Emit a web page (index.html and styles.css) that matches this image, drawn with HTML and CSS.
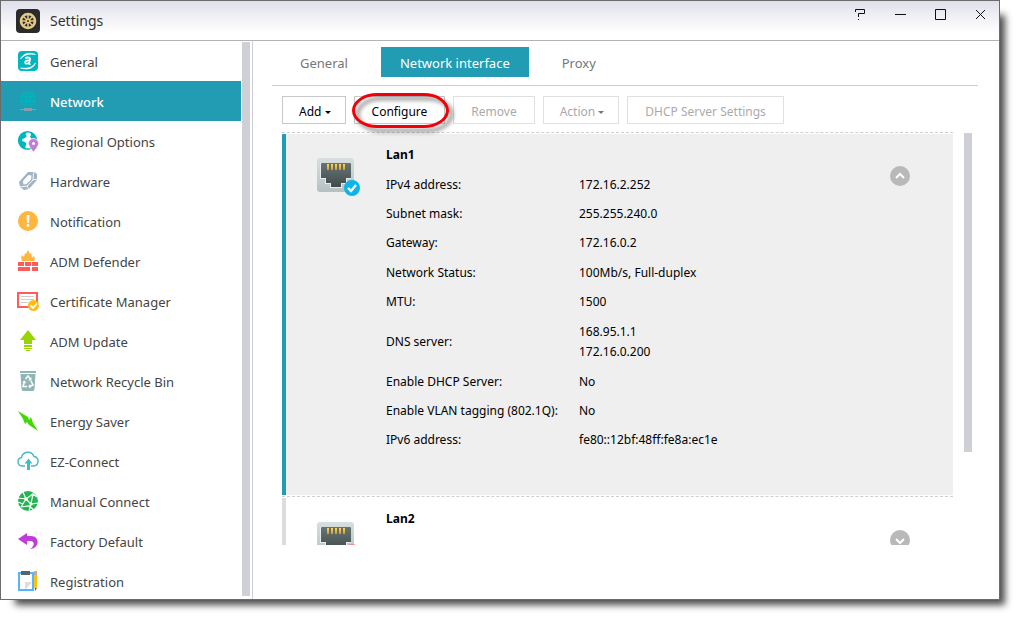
FILE: index.html
```
<!DOCTYPE html>
<html lang="en">
<head>
  <meta charset="UTF-8">
  <meta name="viewport" content="width=device-width, initial-scale=1.0">
  <title>Settings</title>
  <link rel="stylesheet" href="styles.css">
</head>
<body>

  <div class="window">
    <header class="title-bar">
      <svg class="app-icon" viewBox="0 0 24 24">
        <rect width="24" height="24" rx="4" fill="#2b2b2b"/>
        <circle cx="12" cy="12" r="7" fill="none" stroke="#e5ca85" stroke-width="2.6"/>
        <path d="M12 5v14M5 12h14M7 7l10 10M17 7L7 17" stroke="#e5ca85" stroke-width="1.5"/>
        <circle cx="12" cy="12" r="2.6" fill="#e5ca85"/>
        <circle cx="12" cy="12" r="1" fill="#2b2b2b"/>
      </svg>
      <h1>Settings</h1>
      <div class="window-buttons">
        <button aria-label="Help"><svg viewBox="0 0 12 12"><path d="M1.5 4V1.5h9v4h-6V9M4 11.5h1"/></svg></button>
        <button aria-label="Minimize"><svg viewBox="0 0 12 12"><path d="M1 6.5h11"/></svg></button>
        <button aria-label="Maximize"><svg viewBox="0 0 12 12"><path d="M1.5 1.5h10v10h-10z"/></svg></button>
        <button aria-label="Close"><svg viewBox="0 0 12 12"><path d="M2 2l9 9M11 2l-9 9"/></svg></button>
      </div>
    </header>

    <div class="content">
      <nav class="sidebar">
        <a href="#general">
          <svg viewBox="0 0 22 22"><rect x="1" y="1" width="20" height="20" rx="4" fill="#00b7bd"/><path d="M3.5 9C6 3.5 12 2 18.500 4.500 12 3.500 7 4.500 3.500 9zM18.500 13c-2 5.500-8 7.500-15 5 7 .8 12-.5 15-5z" fill="#fff" stroke="#fff" stroke-width=".6"/><path d="M8.300 8.300c2-1.200 5.200-1.200 4.700 1l-.9 4c0 .8.400 1 1.400.7M12.800 10.500c-3-.3-5 .5-4.600 2.300.4 1.500 3.400 1 4.200-.8" fill="none" stroke="#fff" stroke-width="1.800"/></svg>
          General
        </a>
        <a href="#network" class="active">
          <svg viewBox="0 0 22 22"><circle cx="11" cy="9" r="8" fill="#00b5bd"/><path d="M3 9h16M4.500 5h13M4.500 13h13M11 1v16M11 1C5 5 5 13 11 17M11 1c6 4 6 12 0 16" fill="none" stroke="#219cb2" stroke-width=".7"/><path d="M3 19.500h16" stroke="#8d9daf"/><path d="M7 18h8v3H7z" fill="#8d9daf"/></svg>
          Network
        </a>
        <a href="#regional">
          <svg viewBox="0 0 22 22"><circle cx="10.500" cy="10.500" r="8.800" fill="#fff" stroke="#00b5bd" stroke-width="1.600"/><path d="M2 8c1-4 4-6 8-6l-1.500 2.500L10 6 8 8 5.500 9 5 11l3 1 1.500 2-1 2v3.500C4 18 1 13 2 8zM13 2c4 1 6 4 6.500 7l-3-1-1.500 1-2-2 1-2z" fill="#00b5bd"/><path d="M16.500 8.500a5 5 0 0 0-5 5c0 3 5 8.500 5 8.500s5-5.500 5-8.500a5 5 0 0 0-5-5z" fill="#c07fd6" stroke="#fff" stroke-width=".6"/><circle cx="16.500" cy="13.500" r="1.500" fill="#fff"/></svg>
          Regional Options
        </a>
        <a href="#hardware">
          <svg viewBox="0 0 22 22"><path d="M11 2h6l3 2v6l-8 9-5 1-4-3-1-5z" fill="#a1b3c5"/><path d="M11.500 5l3 .5-.5 4-4.500 4.500-3 .5L6 11z" fill="#fff"/><path d="M16.500 2.500L16 10l-6 6-7 1M16 10l4-1M10 16l2 3" fill="none" stroke="#fff" stroke-width=".9"/></svg>
          Hardware
        </a>
        <a href="#notification">
          <svg viewBox="0 0 22 22"><circle cx="11" cy="11" r="10" fill="#ffb53e"/><path d="M9.500 5h3L12 13h-2z" fill="#fff"/><circle cx="11" cy="15.500" r="1.400" fill="#fff"/></svg>
          Notification
        </a>
        <a href="#defender">
          <svg viewBox="0 0 22 22"><path d="M5 11c-1-2-1-4 0-6l2 2 1-4 1 1 2-4 2 4 1-1 1 5 2-2c1 2 1 4 0 5z" fill="#ffb53e"/><path d="M1 12h6v4H1zM8 12h6v4H8zM15 12h6v4h-6zM1 17h12v4H1zM15 17h6v4h-6z" fill="#ff5b5b"/></svg>
          ADM Defender
        </a>
        <a href="#certificate">
          <svg viewBox="0 0 22 22"><path d="M1 3h19v14H1z" fill="#fff" stroke="#ff5b5b" stroke-width="2"/><path d="M4 6.500h13M4 9.500h13M4 12.500h7" stroke="#ccc"/><circle cx="16.500" cy="15.500" r="5.500" fill="#ffbd0b"/><path d="M13.500 15.500l2.500 2.500 4-4.500" fill="none" stroke="#fff" stroke-width="1.800"/></svg>
          Certificate Manager
        </a>
        <a href="#update">
          <svg viewBox="0 0 22 22"><path d="M11 0l8 10h-4v4H7v-4H3zM7 15h8v2H7zM7 18h8v1H7zM9 20h4v1H9z" fill="#98d400"/></svg>
          ADM Update
        </a>
        <a href="#recycle">
          <svg viewBox="0 0 22 22"><path d="M3 1h16v2H3zM3.500 4h15l-1 15q0 2-2 2h-9q-2 0-2-2z" fill="#8fb5b4"/><path d="M8.500 9L11 6l2.500 3M14 11l2 4-3 1.500M10 16.500H6l1.500-5" fill="none" stroke="#fff" stroke-width="1.500"/><path d="M14.500 7v3.500H11zM13.500 14v4.500l-2.500-2zM5 12l3-1.500 1 3z" fill="#fff"/></svg>
          Network Recycle Bin
        </a>
        <a href="#energy">
          <svg viewBox="0 0 22 22"><path d="M1 1l10 6 1 3 2-3 2 6 5 8-9-6-2-3-2 2-2-5z" fill="#42d900"/></svg>
          Energy Saver
        </a>
        <a href="#ezconnect">
          <svg viewBox="0 0 22 22"><path d="M8 16H5a4.300 4.300 0 0 1-.5-8.500A6.500 6.500 0 0 1 17 6.500a4.800 4.800 0 0 1 0 9.500h-3" fill="none" stroke="#47b9c1" stroke-width="1.400"/><path d="M11.500 8.500l4 5h-2.500V20h-3v-6.500H7.500z" fill="#47b9c1"/></svg>
          EZ-Connect
        </a>
        <a href="#manual">
          <svg viewBox="0 0 22 22"><circle cx="11" cy="11" r="10" fill="#22b552"/><path d="M1 8l8 1 7-5 4 3M9 9L6 2M9 9l-5 8M9 9l5 5 7-1M14 14l-2 7M14 14l2-10M4 17l8-1 5 4M1 12l5 2" fill="none" stroke="#fff" stroke-width="1.200"/><circle cx="9" cy="9" r="1.800" fill="#fff"/><circle cx="14" cy="14" r="1.500" fill="#fff"/><circle cx="15.500" cy="5" r="1.500" fill="#fff"/></svg>
          Manual Connect
        </a>
        <a href="#factory">
          <svg viewBox="0 0 22 22"><path d="M1 9l9-6v3h4c9 0 9 12-1 13 5-3 5-8 0-8h-3v4z" fill="#c13bd9"/></svg>
          Factory Default
        </a>
        <a href="#registration">
          <svg viewBox="0 0 22 22"><path d="M2 3h14v17H2z" fill="#fff" stroke="#59b4fb" stroke-width="2"/><path d="M8 12h7l-6 7H8z" fill="#ddd"/><path d="M4 1h9v4H4z" fill="#546770"/><path d="M17 4h3v13l-1.500 4-1.500-4z" fill="#ffc107"/><path d="M17 1h3v2h-3z" fill="#f2a15e"/><path d="M17 3h3v2h-3z" fill="#a8b0b8"/><path d="M18 18h1.500l-.75 3z" fill="#444"/></svg>
          Registration
        </a>
      </nav>
      <div class="sidebar-scroll"></div>

      <main class="main">
        <div class="tabs">
          <button>General</button>
          <button class="active">Network interface</button>
          <button>Proxy</button>
        </div>

        <div class="toolbar">
          <button class="menu">Add <span class="arrow"></span></button>
          <button class="configure">Configure<span class="ring"></span></button>
          <button disabled>Remove</button>
          <button class="menu" disabled>Action <span class="arrow"></span></button>
          <button disabled>DHCP Server Settings</button>
        </div>

        <div class="list-area">
          <div class="list">
            <hr>
            <section class="lan open">
              <div class="port">
                <svg class="port-icon" viewBox="0 0 44 40">
                  <defs>
                    <linearGradient id="frame" x2="0" y2="1"><stop offset="0" stop-color="#d8dfe1"/><stop offset="1" stop-color="#b6c0c3"/></linearGradient>
                    <linearGradient id="socket" x2="0" y2="1"><stop offset="0" stop-color="#667473"/><stop offset="1" stop-color="#404c4c"/></linearGradient>
                    <linearGradient id="pins" x2="0" y2="1"><stop offset="0" stop-color="#ffd95c"/><stop offset="1" stop-color="#d99522"/></linearGradient>
                  </defs>
                  <rect width="37" height="34" rx="3" fill="url(#frame)"/>
                  <path d="M3 5h31v16h-4v5h-5v4H13v-4H8v-5H3z" fill="#e6ebec"/>
                  <path d="M5 5h28q1 0 1 1v14h-5v5h-5v4H14v-4H9v-5H4V6q0-1 1-1z" fill="url(#socket)"/>
                  <path d="M10 6h2v6h-2zM14 6h2v6h-2zM18 6h2v6h-2zM22 6h2v6h-2zM26 6h2v6h-2z" fill="url(#pins)"/>
                  <circle cx="35" cy="30" r="8" fill="#0bb5ea"/>
                  <path d="M31 30l3 3 5-6" fill="none" stroke="#fff" stroke-width="2.400"/>
                </svg>
              </div>
              <div class="details">
                <h2>Lan1</h2>
                <table>
                  <tr><th>IPv4 address:</th><td>172.16.2.252</td></tr>
                  <tr><th>Subnet mask:</th><td>255.255.240.0</td></tr>
                  <tr><th>Gateway:</th><td>172.16.0.2</td></tr>
                  <tr><th>Network Status:</th><td>100Mb/s, Full-duplex</td></tr>
                  <tr><th>MTU:</th><td>1500</td></tr>
                  <tr><th>DNS server:</th><td>168.95.1.1<br>172.16.0.200</td></tr>
                  <tr><th>Enable DHCP Server:</th><td>No</td></tr>
                  <tr><th>Enable VLAN tagging (802.1Q):</th><td>No</td></tr>
                  <tr><th>IPv6 address:</th><td>fe80::12bf:48ff:fe8a:ec1e</td></tr>
                </table>
              </div>
              <button class="toggle" aria-label="Collapse"><svg viewBox="0 0 20 20"><path d="M6 12l4-4 4 4"/></svg></button>
            </section>
            <hr>
            <section class="lan">
              <div class="port">
                <svg class="port-icon" viewBox="0 0 44 40">
                  <rect width="37" height="34" rx="3" fill="url(#frame)"/>
                  <path d="M3 5h31v16h-4v5h-5v4H13v-4H8v-5H3z" fill="#e6ebec"/>
                  <path d="M5 5h28q1 0 1 1v14h-5v5h-5v4H14v-4H9v-5H4V6q0-1 1-1z" fill="url(#socket)"/>
                  <path d="M10 6h2v6h-2zM14 6h2v6h-2zM18 6h2v6h-2zM22 6h2v6h-2zM26 6h2v6h-2z" fill="url(#pins)"/>
                  <circle cx="35" cy="30" r="8" fill="#f08a8a"/>
                </svg>
              </div>
              <div class="details">
                <h2>Lan2</h2>
              </div>
              <button class="toggle" aria-label="Expand"><svg viewBox="0 0 20 20"><path d="M6 9l4 4 4-4"/></svg></button>
            </section>
          </div>
          <div class="list-scroll"></div>
        </div>
      </main>
    </div>
  </div>

</body>
</html>
```
FILE: styles.css
```
* {
  box-sizing: border-box;
}

body {
  margin: 0;
  height: 100vh;
  padding: 0 20px 20px 0;
  background-color: #fff;
  font-family: "Noto Sans", "Open Sans", sans-serif;
  font-size: 12px;
  color: #000;
  overflow: hidden;
}

button {
  font-family: inherit;
  cursor: pointer;
}

.window {
  display: flex;
  flex-direction: column;
  height: 100%;
  border: 1px solid #6b6b6b;
  background-color: #fff;
  box-shadow: 10px 10px 7px -5px rgba(0, 0, 0, 0.7);
}

.title-bar {
  display: flex;
  align-items: center;
  flex-shrink: 0;
  height: 40px;
  padding: 0 13px 0 15px;
  border-bottom: 1px solid #b2b2b8;
  background: linear-gradient(#e0e0eb, #fff 80%);
}

.app-icon {
  width: 24px;
  height: 24px;
}

.title-bar h1 {
  flex: 1;
  margin: 0 0 0 10px;
  font-size: 14px;
  font-weight: normal;
  color: #333;
}

.window-buttons {
  display: flex;
  gap: 28px;
  padding-bottom: 14px;
}

.window-buttons button {
  width: 12px;
  height: 12px;
  padding: 0;
  border: none;
  background: none;
}

.window-buttons svg {
  display: block;
  width: 12px;
  height: 12px;
  fill: none;
  stroke: #111;
}

.content {
  display: flex;
  flex: 1;
  min-height: 0;
}

.sidebar {
  width: 240px;
  overflow: hidden;
}

.sidebar a {
  display: flex;
  align-items: center;
  gap: 11px;
  height: 40px;
  padding: 2px 0 0 16px;
  font-size: 13px;
  color: #444;
  text-decoration: none;
}

.sidebar svg {
  width: 22px;
  height: 22px;
  margin-bottom: 2px;
}

.sidebar a.active {
  background-color: #219cb2;
  color: #fff;
  font-weight: 500;
}

.sidebar-scroll {
  width: 8px;
  margin: 1px 2px 3px 1px;
  background-color: #cfcfd6;
}

.main {
  flex: 1;
  min-width: 0;
  padding: 6px 21px 0 19px;
  border-left: 1px solid #cfcfd6;
}

.tabs {
  display: flex;
  gap: 5px;
  padding-bottom: 8px;
  border-bottom: 1px solid #cfcfd3;
}

.tabs button {
  height: 30px;
  padding: 2px 28px 0;
  border: none;
  background: none;
  font-size: 13px;
  color: #777;
}

.tabs button.active {
  padding: 2px 19px 0;
  background-color: #219cb2;
  color: #fff;
}

.toolbar {
  display: flex;
  gap: 8px;
  padding: 10px 0 7px 10px;
}

.toolbar button {
  height: 28px;
  padding: 2px 17px 0;
  border: 1px solid #c8c8c8;
  background-color: #fff;
  font-size: 12px;
  color: #000;
  white-space: nowrap;
}

.toolbar .menu {
  padding: 2px 14px 0 16px;
}

.toolbar button:disabled {
  border-color: #e0e0e0;
  color: #aaa;
}

.arrow {
  display: inline-block;
  border: 3px solid transparent;
  border-top-color: #000;
  border-bottom: none;
  vertical-align: middle;
}

.toolbar button:disabled .arrow {
  border-top-color: #777;
}

.toolbar .configure {
  position: relative;
}

/* red callout around the button */
.ring {
  position: absolute;
  inset: -4px -5px -5px -3px;
  border: 3px solid #f00008;
  border-radius: 26px / 18px;
  filter: drop-shadow(4px 4px 2px rgba(0, 0, 0, 0.5));
}

.list-area {
  display: flex;
  padding: 0 6px 0 10px;
}

.list {
  flex: 1;
  max-height: 414px;
  overflow: hidden;
}

.list hr {
  margin: 1px 0;
  border: none;
  border-top: 1px dashed #cfcfd3;
}

.lan {
  display: flex;
  align-items: flex-start;
  padding-bottom: 40px;
  border-left: 4px solid #dcdcdc;
}

.lan.open {
  border-left-color: #219cb2;
  background-color: #efefef;
}

.port {
  width: 100px;
  padding: 24px 0 0 31px;
}

.port-icon {
  display: block;
  width: 44px;
  height: 40px;
}

.details {
  flex: 1;
  padding-top: 11px;
}

.details h2 {
  margin: 0 0 5px;
  font-size: 12px;
  line-height: 20px;
  font-weight: bold;
}

.details table {
  height: 285px;
  border-collapse: collapse;
}

.details th,
.details td {
  padding: 4px 0;
  line-height: 20px;
  font-weight: normal;
  text-align: left;
}

.details th {
  width: 193px;
}

.toggle {
  width: 20px;
  height: 20px;
  margin: 32px 43px 0 0;
  padding: 0;
  border: none;
  border-radius: 50%;
  background-color: #b9b9b9;
}

.toggle svg {
  display: block;
  fill: none;
  stroke: #fff;
  stroke-width: 2;
}

.list-scroll {
  width: 8px;
  height: 319px;
  margin: 2px 0 0 11px;
  background-color: #cfcfd6;
}
```
